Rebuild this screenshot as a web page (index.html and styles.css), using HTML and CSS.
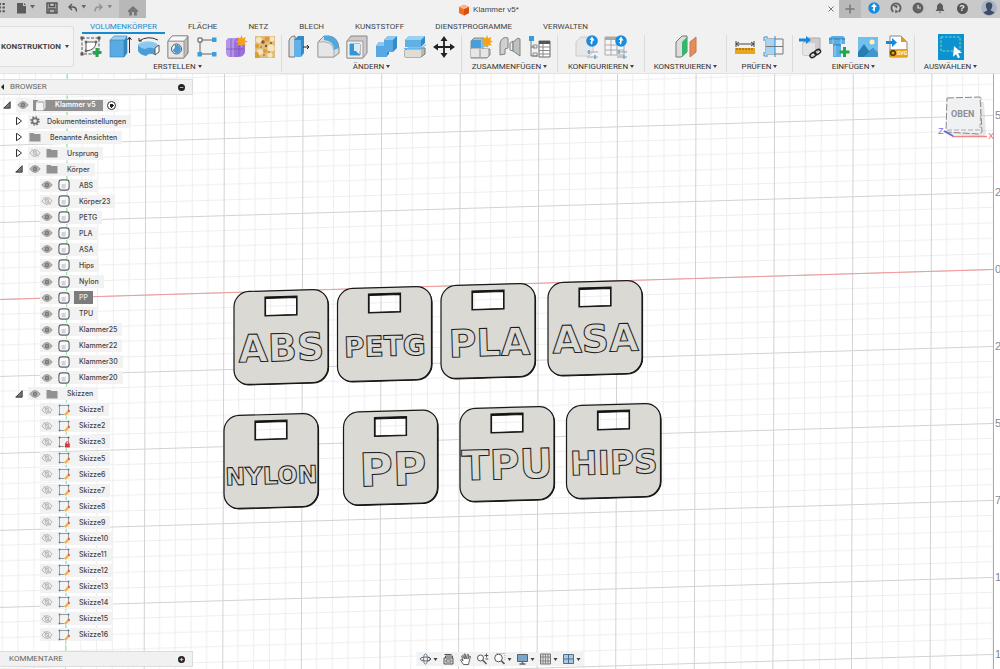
FILE: index.html
```html
<!DOCTYPE html>
<html lang="de">
<head>
<meta charset="utf-8">
<title>Klammer v5*</title>
<link rel="stylesheet" href="styles.css">
</head>
<body>
<svg class="defs" aria-hidden="true">
  <symbol id="eye" viewBox="0 0 12 10"><path d="M.8 5Q6-1.8 11.2 5 6 11.8.8 5Z" fill="#b4b4b4" stroke="#999"/><circle cx="6" cy="5" r="2.2" fill="#777"/><circle cx="6" cy="5" r=".8" fill="#bbb"/></symbol>
  <symbol id="eye-off" viewBox="0 0 12 10"><path d="M.8 5Q6-1.8 11.2 5 6 11.8.8 5ZM2.5 1.5l7.500 7" fill="none" stroke="#aaa" stroke-width=".9"/><circle cx="6" cy="5" r="1.900" fill="none" stroke="#aaa" stroke-width=".9"/></symbol>
  <symbol id="body" viewBox="0 0 12 12"><rect x=".9" y=".9" width="10.200" height="10.200" rx="2.800" fill="#fafafa" stroke="#59636b" stroke-width="1.100"/><path d="M3.500 5h4v4.500h-4z" fill="#d0d4d6"/><path d="M7.500 4v5.500" stroke="#e2e4e5"/></symbol>
  <symbol id="sketch" viewBox="0 0 12 12"><path d="M1.500 1.500h9v5M1.500 1.500v9h5" fill="none" stroke="#888" stroke-width=".8"/><path d="M.7.700h1.600v1.600H.7zM9.700.700h1.600v1.600H9.700zM.7 9.700h1.600v1.600H.7z" fill="#3279b8"/><path d="m7 11 3.800-4" stroke="#f2aa38" stroke-width="2"/><path d="m10.300 7.500 1.200-1.200" stroke="#e65338" stroke-width="2"/></symbol>
  <symbol id="sketch-lock" viewBox="0 0 12 12"><path d="M1.500 1.500h9v5M1.500 1.500v9h5" fill="none" stroke="#888" stroke-width=".8"/><path d="M.7.700h1.600v1.600H.7zM9.700.700h1.600v1.600H9.700zM.7 9.700h1.600v1.600H.7z" fill="#555"/><path d="M7 7.500h4.800v4H7z" fill="#d93440"/><path d="M8 8V6.500q1.400-1.600 2.800 0V8" fill="none" stroke="#d93440"/></symbol>
  <symbol id="folder" viewBox="0 0 12 10"><path d="M.5 1h4l1 1h6v7.500H.5z" fill="#929292"/></symbol>
  <symbol id="open" viewBox="0 0 8 8"><path d="M7.200.700v6.500H.7z" fill="#777" stroke="#222" stroke-width=".8"/></symbol>
  <symbol id="closed" viewBox="0 0 8 8"><path d="M1.500.2 6.500 4l-5 3.800z" fill="#fff" stroke="#333"/></symbol>
  <symbol id="gear" viewBox="0 0 12 12"><circle cx="6" cy="6" r="2.700" fill="none" stroke="#747474" stroke-width="1.800"/><circle cx="6" cy="6" r="4" fill="none" stroke="#747474" stroke-width="1.600" stroke-dasharray="1.570"/></symbol>
  <pattern id="grid" width="78.600" height="77" patternUnits="userSpaceOnUse" patternTransform="matrix(1 -.0302 -.003 1 145 217.600)">
    <path d="M15.700 0v77M31.400 0v77M47.200 0v77M62.900 0v77M0 15.400h78.600M0 30.800h78.600M0 46.200h78.600M0 61.600h78.600" stroke="#eee"/>
    <path d="M.5 0v77M0 .5h78.600" stroke="#d2d2d2"/>
  </pattern>
  <symbol id="plate" viewBox="-50 -50 100 100" overflow="visible">
    <g id="plate-shape" fill-rule="evenodd">
      <path transform="translate(.6 1)" fill="#111" stroke="#111" d="M-32-46h64a15 15 0 0 1 15 15v62a15 15 0 0 1-15 15h-64a15 15 0 0 1-15-15v-62a15 15 0 0 1 15-15zM-16-40v17h31v-17z"/>
      <path fill="#dad9d4" stroke="#181818" stroke-width="1.200" d="M-32-46.500h64a15 15 0 0 1 15 15v63a15 15 0 0 1-15 15h-64a15 15 0 0 1-15-15v-63a15 15 0 0 1 15-15zM-16-40.500v19h32v-19z"/>
    </g>
  </symbol>
</svg>

<header class="app-header">
  <div class="titlebar">
    <div class="quick">
      <button class="q-grid" aria-label="Daten"><svg viewBox="0 0 6 12"><path d="M0 1h1v2H0zM2.500 1h2.300v2H2.500zM0 4.600h1v2H0zM2.500 4.600h2.300v2H2.500zM0 8.200h1v2H0zM2.500 8.200h2.300v2H2.500z" fill="#555"/></svg></button>
      <button class="q-wide" aria-label="Datei"><svg viewBox="0 0 20 12"><path d="M1 1h6v3h3v7.500H1zM8 1l2 2H8z" fill="#5b5b5b"/><path d="M14 3h5l-2.500 3.500z" fill="#666"/></svg></button>
      <button class="q-save" aria-label="Speichern"><svg viewBox="0 0 12 12"><path d="M1 1h10v10H1zM3.500 1v3.500h5V1M3 11V7h6v4" fill="#aaa" stroke="#555" stroke-width="1.400"/></svg></button>
      <button class="q-wide" aria-label="Rückgängig"><svg viewBox="0 0 20 12"><path d="M2 5h4.500q3 .5 3 4.500M5 2 2 5l3 3" fill="none" stroke="#555" stroke-width="1.400"/><path d="M14.500 3h4.600l-2.300 3.500z" fill="#666"/></svg></button>
      <button class="q-wide" aria-label="Wiederholen"><svg viewBox="0 0 20 12"><path d="M9 5H5q-3 .5-3 4.500M6 2l3 3-3 3" fill="none" stroke="#929292" stroke-width="1.400"/><path d="M14.500 3h4.600l-2.300 3.500z" fill="#888"/></svg></button>
      <button class="q-home" aria-label="Startseite"><svg viewBox="0 0 12 12"><path d="M1 6.500 6 2l5 4.500V8H9.800v3.500H7V8H5v3.500H2.200V8H1z" fill="#777"/></svg></button>
    </div>
    <div class="doc-tab">
      <span class="doc-name"><svg viewBox="0 0 12 12"><path d="m6 .8 5 2.200v6L6 11.500 1 9V3z" fill="#f36b21"/><path d="m1 3 5-2.200L11 3 6 5.200z" fill="#ffb382"/><path d="m6 5.200 5-2.200v6l-5 2.500z" fill="#dd4d12"/></svg>Klammer v5*</span>
      <button class="close" aria-label="Schließen"><svg viewBox="0 0 8 8"><path d="m1.500 1.500 5 5m0-5-5 5" stroke="#777"/></svg></button>
    </div>
    <div class="account">
      <button class="new-tab" aria-label="Neu"><svg viewBox="0 0 12 12"><path d="M6 1.500v9M1.500 6h9" stroke="#777" stroke-width="1.500"/></svg></button>
      <button aria-label="Erweiterungen"><svg viewBox="0 0 12 12"><circle cx="6" cy="6" r="5.700" fill="#168be0"/><path d="M6 1.500 9 5H7.200L6.500 10 4 7h1.200V5H3z" fill="#fff"/></svg></button>
      <button aria-label="Aktualisieren"><svg viewBox="0 0 12 12"><path d="M3.300 9.700A4.600 4.600 0 1 1 8.700 9.700" fill="none" stroke="#5c5c5c" stroke-width="1.800"/><path d="M2 2.500 7.500 3.500 7 6.500M5.500 7.500l3 2.500-3.500 1z" fill="#5c5c5c"/></svg></button>
      <button aria-label="Auftragsstatus"><svg viewBox="0 0 12 12"><circle cx="6" cy="6" r="4.700" fill="#666" stroke="#5c5c5c" stroke-width="1.500"/><path d="M6 3v3h3" fill="none" stroke="#ddd" stroke-width="1.200"/></svg></button>
      <button aria-label="Benachrichtigungen"><svg viewBox="0 0 12 12"><path d="M1.500 9 3 7V4q.3-2 2.300-2.600Q6-.3 6.700 1.400 8.700 2 9 4v3l1.500 2zM4.800 9.800h2.400L6 11.300z" fill="#5c5c5c"/></svg></button>
      <button class="help" aria-label="Hilfe"><span>?</span></button>
      <button class="profile" aria-label="Profil"><svg class="avatar" viewBox="0 0 16 16"><circle cx="8" cy="8" r="7.800" fill="#a9b5c7"/><path d="M4.800 5a3.300 3.300 0 0 1 6.500 0c.2 2-.8 4-1.500 4.500v1l4 2Q8 17.800 2.200 12.500l4-2v-1Q4.700 8 4.800 5z" fill="#404b66"/></svg></button>
    </div>
  </div>

  <div class="ribbon">
    <button class="workspace">KONSTRUKTION<i class="caret"></i></button>
    <div class="ribbon-main">
      <nav class="tabs">
        <a href="#" class="active">VOLUMENKÖRPER</a><a href="#">FLÄCHE</a><a href="#">NETZ</a><a href="#">BLECH</a><a href="#">KUNSTSTOFF</a><a href="#">DIENSTPROGRAMME</a><a href="#">VERWALTEN</a>
      </nav>
      <div class="groups">
        <section class="group">
          <div class="tools">
            <button aria-label="Skizze"><svg viewBox="0 0 24 24"><path d="M3 3h17v16H3z" fill="none" stroke="#555" stroke-dasharray="3 1.500"/><path d="M1.500 1.500h3v3h-3zM18.500 1.500h3v3h-3zM1.500 17.500h3v3h-3z" fill="#555"/><path d="M7 7h10q0 8-10 9z" fill="#fff" stroke="#555"/><path d="M5.800 5.800h2.400v2.400H5.800zM15.800 5.800h2.400v2.400h-2.400zM5.800 14.800h2.400v2.400H5.800z" fill="#666"/><path d="M18 13v9M13.500 17.500h9" stroke="#24a548" stroke-width="3"/></svg></button>
            <button aria-label="Extrusion"><svg viewBox="0 0 24 24"><path d="M2 5h14v17H2z" fill="#5aaae3"/><path d="m2 5 4-4h13l-3 4z" fill="#9bd0f2"/><path d="m16 5 3-4v17l-3 4z" fill="#3489c4"/><path d="M2 5h14v17H2zm0 0 4-4h13v17l-3 4" fill="none" stroke="#357fae" stroke-width=".6"/><path d="M21.500 18V3M19.500 5l2-3 2 3" fill="none" stroke="#333"/></svg></button>
            <button aria-label="Drehen"><svg viewBox="0 0 24 24"><path d="M1 9q9-5 18-1l3 3-4 3v6q-5-3-9 0l-7-4z" fill="#8cc8ef"/><path d="M1 10q2 3 7 4 5-3 10 0v6q-5-3-9 1-6-1-8-5z" fill="#4a9dd8"/><path d="m18 13 4-3v7l-4 3z" fill="#fff" stroke="#555"/><path d="M2 6q9-6 19-1M2 3v3h3" fill="none" stroke="#333"/></svg></button>
            <button aria-label="Bohrung"><svg viewBox="0 0 24 24"><path d="m2 6 4-5h16v17l-4 5H2z" fill="#bbb" stroke="#777"/><path d="M2 6h16v17H2z" fill="#e8e8e8" stroke="#999"/><path d="m2 6 4-5h16l-4 5z" fill="#f8f8f8" stroke="#777" stroke-width=".6"/><circle cx="10.500" cy="14" r="5" fill="#fff" stroke="#555"/><path d="M8.500 10q5-1 6.500 4-1 4-4.500 4.500-3-1-4-3.500 3-1 2-5z" fill="#4a9bd5"/></svg></button>
            <button aria-label="Muster"><svg viewBox="0 0 24 24"><path d="M7 5h10M5 7v10M7 19h10" fill="none" stroke="#666"/><path d="M3 3h4v4H3z" fill="#fff" stroke="#555"/><path d="M17 2.500h4.500V7H17zM2.500 17H7v4.500H2.500zM17 17h4.500v4.500H17z" fill="#3e9ddc"/></svg></button>
            <button aria-label="Form"><svg viewBox="0 0 24 24"><path d="M2 8q0-5 5-5h8q6 1 6 7v7q-1 5-7 5H7q-5 0-5-6z" fill="#9a71da"/><path d="M2 8q0-5 5-5h8q-5 0-5 5v14H7q-5 0-5-6z" fill="#b493e9"/><path d="M2 14h18M7 4v18M15 5v16" stroke="#7550b8" fill="none" stroke-width=".7"/><path d="m17.500 0 1.200 3.300 3.200-1.200-1.300 3.200L24 6.500l-3.400 1.200 1.300 3.200-3.200-1.300-1.200 3.400-1.200-3.400-3.200 1.300 1.300-3.200L11 6.500l3.400-1.200-1.300-3.200 3.200 1.200z" fill="#f5a21b"/></svg></button>
            <button aria-label="Textur"><svg viewBox="0 0 24 24"><path d="M2 1h20v22H2z" fill="#e0bd7c"/><g fill="#f2e5bf"><circle cx="6" cy="5" r="3"/><circle cx="18" cy="13" r="3.500"/><circle cx="7" cy="17" r="3"/><circle cx="17" cy="20" r="2.500"/><circle cx="19" cy="4" r="2.500"/></g><g fill="#dd9c2f"><circle cx="14" cy="4" r="2.500"/><circle cx="4" cy="11" r="2"/><circle cx="12" cy="16" r="2"/><path d="M2 17h3l2 6H2z"/></g><g fill="#85552a"><circle cx="10" cy="7" r="1.800"/><circle cx="18" cy="8" r="1"/><circle cx="13" cy="11" r="1.200"/><circle cx="8" cy="12" r=".8"/><circle cx="16" cy="17" r=".8"/><circle cx="11" cy="20" r=".8"/></g></svg></button>
          </div>
          <button class="menu">ERSTELLEN<i class="caret"></i></button>
        </section>
        <section class="group">
          <div class="tools">
            <button aria-label="Drücken/Ziehen"><svg viewBox="0 0 24 24"><path d="M2 6q1-5 6-5v21H2z" fill="#ddd" stroke="#777"/><path d="m7 5 4-4h6v17l-3 4H7z" fill="#348bca"/><path d="M7 5h7v17H7z" fill="#62b1e7"/><path d="M16 12h6m-2-2 2 2-2 2" fill="none" stroke="#222"/></svg></button>
            <button aria-label="Abrunden"><svg viewBox="0 0 24 24"><path d="M2 7 8 1h5q9 1 10 12v5l-5 4H2z" fill="#ddd" stroke="#888"/><path d="M8 1h5q9 1 10 12l-5 2q0-9-10-10z" fill="#50a8df"/><path d="M2 7q15-2 16 9v6H2z" fill="#e6e6e6" stroke="#aaa"/></svg></button>
            <button aria-label="Schale"><svg viewBox="0 0 24 24"><path d="m2 6 4-5h16v17l-4 5H2z" fill="#ccc" stroke="#888"/><path d="M2 6h16v17H2z" fill="#eee" stroke="#999"/><path d="M5 9h10v11H5z" fill="#f8f8f8" stroke="#888"/><path d="M5 9v11h10l-4-4H9V9z" fill="#3795d3"/><path d="M9 9h6v7H9z" fill="#d8ebf7"/></svg></button>
            <button aria-label="Kombinieren"><svg viewBox="0 0 24 24"><path d="m2 11 3-4h5V5l4-4h9v12l-4 4h-4v2l-3 3H2z" fill="#328bc9"/><path d="M2 11h8V5h9v12h-6v5H2z" fill="#58a9e1"/><path d="m10 5 4-4h9l-4 4zM2 11l3-4h5v4z" fill="#8ccaf1"/></svg></button>
            <button aria-label="Teilen"><svg viewBox="0 0 24 24"><path d="m2 5 4-4h16v7l-4 4H2z" fill="#318ac9"/><path d="M2 5h16v7H2z" fill="#60afe5"/><path d="m2 5 4-4h16l-4 4z" fill="#9bd1f2"/><path d="m2 15 3-2h17v6l-4 3H2z" fill="#b8bbb5" stroke="#777"/><path d="M2 15h16v7H2z" fill="#ddddd5"/><path d="M1 13.500h17l5-4" fill="none" stroke="#65b4ed"/></svg></button>
            <button aria-label="Verschieben"><svg viewBox="0 0 24 24"><path d="M12 3v18M3 12h18" stroke="#222" stroke-width="1.800"/><path d="m12 1 3.500 5h-7zM12 23l3.500-5h-7zM1 12l5-3.500v7zM23 12l-5-3.500v7z" fill="#222"/></svg></button>
          </div>
          <button class="menu">ÄNDERN<i class="caret"></i></button>
        </section>
        <section class="group">
          <div class="tools">
            <button aria-label="Komponente"><svg viewBox="0 0 24 24"><path d="m2 6 3-3h9v11h7v6l-3 3H2z" fill="#bbb" stroke="#888"/><path d="M2 5h10v8H2z" fill="#459fdd"/><path d="M2 14h8v8H2zM12 14h7v8h-7z" fill="#e6e6e6"/><path d="m12 10 3-2h6l-2 4h-7z" fill="#80c4ed"/><path d="m18 0 1.200 3.200L22.500 2l-1.200 3.200L24 6.500l-2.700 1.200 1.200 3.200-3.300-1.200L18 13l-1.200-3.300-3.200 1.200 1.200-3.200L12 6.500l2.800-1.300L13.600 2l3.200 1.200z" fill="#f5a21b"/></svg></button>
            <button aria-label="Verbindung"><svg viewBox="0 0 24 24"><path d="M2 20V8q2-7 8-5v10l-3 1v5z" fill="#cfd1d1" stroke="#7e8282"/><path d="M12 8v7l3 1V6z" fill="#eee" stroke="#7e8282"/><path d="m15 7 5-4 2 1v17l-7-5z" fill="#bfc1c1" stroke="#7e8282"/></svg></button>
            <button aria-label="Stückliste"><svg viewBox="0 0 24 24"><path d="M2 1h5v5H2z" fill="#389bdd"/><path d="M4 6v15h7M4 12h4" fill="none" stroke="#777"/><path d="M12 6h11v16H12z" fill="#fff" stroke="#666"/><path d="M12 6h11v3H12z" fill="#555"/><path d="M12 12h11M12 15.500h11M12 19h11M16 9v13M6 10h4v3H6zM6 18h4v3H6z" fill="none" stroke="#888"/></svg></button>
          </div>
          <button class="menu">ZUSAMMENFÜGEN<i class="caret"></i></button>
        </section>
        <section class="group">
          <div class="tools">
            <button aria-label="Modell konfigurieren"><svg viewBox="0 0 24 24"><path d="m1 7 5-5h12v15l-4 4H1z" fill="#e7e7e7" stroke="#ccc"/><path d="M12 17h11M12 22h11" stroke="#aaa"/><path d="M14 15v4M20 20v4" stroke="#4da9df" stroke-width="1.500"/><circle cx="17" cy="6" r="5.800" fill="#178ce1"/><path d="m17 1.500 2.500 4h-1.700L17 10l-2-3h1V5h-1.500z" fill="#fff"/></svg></button>
            <button aria-label="Konfigurationstabelle"><svg viewBox="0 0 24 24"><path d="M1 2h19v18H1z" fill="#f6f6f6" stroke="#aaa"/><path d="M1 2h19v3H1z" fill="#aaa"/><path d="M1 10h19M1 15h19M7 5v15M13 5v15" stroke="#aaa"/><path d="M13 17h10M13 22h10" stroke="#999"/><path d="M15 15v4M20 20v4" stroke="#65add6" stroke-width="1.500"/><circle cx="17" cy="6" r="5.800" fill="#178ce1"/><path d="m17 1.500 2.500 4h-1.700L17 10l-2-3h1V5h-1.500z" fill="#fff"/></svg></button>
          </div>
          <button class="menu">KONFIGURIEREN<i class="caret"></i></button>
        </section>
        <section class="group">
          <div class="tools">
            <button aria-label="Versatzebene"><svg viewBox="0 0 24 24"><path d="m2 7 6-6h5v16l-6 5H2z" fill="#ddd" stroke="#777"/><path d="m8 7 5-5v15l-5 5z" fill="#36b56c"/><path d="m16 7 6-5v15l-6 5z" fill="#e88d57" stroke="#c57951"/></svg></button>
          </div>
          <button class="menu">KONSTRUIEREN<i class="caret"></i></button>
        </section>
        <section class="group">
          <div class="tools">
            <button aria-label="Messen"><svg viewBox="0 0 24 24"><path d="M3 6v6M21 6v6M3 9h18M6 7 3 9l3 2M18 7l3 2-3 2" fill="none" stroke="#444"/><path d="M2 13h20v6H2z" fill="#eaa51e"/><path d="M4 13v2m3-2v2m3-2v2m3-2v2m3-2v2m3-2v2" stroke="#805b0d"/></svg></button>
            <button aria-label="Schnitt"><svg viewBox="0 0 24 24"><path d="M4 4h17v15H4z" fill="#f4f4f4" stroke="#777"/><path d="M4 4h9v15H4z" fill="#a7d4f2"/><path d="M4 11.500h17" stroke="#777"/><path d="M13 1v21M2 6V2h4M2 17v4h4" fill="none" stroke="#288fda"/></svg></button>
          </div>
          <button class="menu">PRÜFEN<i class="caret"></i></button>
        </section>
        <section class="group">
          <div class="tools">
            <button aria-label="Ableiten"><svg viewBox="0 0 24 24"><path d="m5 8 5-5h12v11l-5 6H5z" fill="#ccc" stroke="#aaa"/><path d="M5 8h12v12H5z" fill="#e5e5e5"/><path d="M1 3.500h7V1l5 4-5 4V6.500H1z" fill="#1688de"/><g fill="none" stroke="#222" stroke-width="1.500"><ellipse cx="15" cy="20" rx="3.200" ry="2.200" transform="rotate(-30 15 20)"/><ellipse cx="19.500" cy="17" rx="3.200" ry="2.200" transform="rotate(-30 19.500 17)"/></g></svg></button>
            <button aria-label="Verbindungselement"><svg viewBox="0 0 24 24"><path d="M2 3 5 1h11l2 2v6H2zM6 9h8v13H6z" fill="#5daee2"/><path d="M2 4h16M6 10h8" stroke="#277dad"/><path d="M8 10v11M6 4v5M14 4v5" stroke="#9bd1f1"/><path d="M17.500 12v10M12.500 17h10" stroke="#24a548" stroke-width="3"/></svg></button>
            <button aria-label="Bild"><svg viewBox="0 0 24 24"><path d="M2 2h20v20H2z" fill="#72bfed"/><circle cx="16" cy="7" r="2.500" fill="#fff4b5"/><path d="M2 17 8 9l5 7 4-3 5 5v4H2z" fill="#287eb4"/><path d="m11 19 6-6 5 5v4H8z" fill="#4298cb"/></svg></button>
            <button aria-label="SVG einfügen"><svg viewBox="0 0 24 24"><path d="M5 1h11l6 6v15H5z" fill="#fff" stroke="#888"/><path d="M16 1v6h6z" fill="#e89b14"/><path d="M4 14h19v8H4z" fill="#eba31b"/><path d="M1 6h6V3l5 4.500L7 12V9H1z" fill="#1688de"/><circle cx="8" cy="18" r="2.300" fill="none" stroke="#40300c" stroke-width="1.500"/><text x="12" y="20" class="svg-word">SVG</text></svg></button>
          </div>
          <button class="menu">EINFÜGEN<i class="caret"></i></button>
        </section>
        <section class="group">
          <div class="tools">
            <button class="selected" aria-label="Auswählen"><svg viewBox="0 0 26 26"><path d="M3 3h19v14H3z" fill="none" stroke="#7cdbb5" stroke-dasharray="2.500 1.500"/><path d="m16 12 8 7-4 .3 2 4-2 1-2-4-3 2.500z" fill="#fff"/></svg></button>
          </div>
          <button class="menu">AUSWÄHLEN<i class="caret"></i></button>
        </section>
      </div>
    </div>
  </div>
</header>

<main class="viewport">
  <svg class="scene">
    <g transform="translate(0 -74)">
      <rect width="100%" height="120%" fill="url(#grid)"/>
      <path d="M0 299.500 993 269.500" stroke="#f29a9a"/>
      <path d="M67 74 66 653" stroke="#9de6a6" stroke-dasharray="8 3"/>
      <g class="tag-art">
        <g transform="translate(281 337)"><use href="#plate" transform="skewY(-1.700)" x="-50" y="-50" width="100" height="100"/><text transform="rotate(-1.700)" y="24" font-size="38">ABS</text></g>
        <g transform="translate(384.500 334)"><use href="#plate" transform="skewY(-1.700)" x="-50" y="-50" width="100" height="100"/><text transform="rotate(-1.700)" y="22" font-size="28">PETG</text></g>
        <g transform="translate(488 331)"><use href="#plate" transform="skewY(-1.700)" x="-50" y="-50" width="100" height="100"/><text transform="rotate(-1.700)" x="1" y="25" font-size="38">PLA</text></g>
        <g transform="translate(595 328)"><use href="#plate" transform="skewY(-1.700)" x="-50" y="-50" width="100" height="100"/><text transform="rotate(-1.700)" y="24" font-size="38">ASA</text></g>
        <g transform="translate(271 461)"><use href="#plate" transform="skewY(-1.700)" x="-50" y="-50" width="100" height="100"/><text transform="rotate(-1.700)" y="23" font-size="24">NYLON</text></g>
        <g transform="translate(390.500 457.500)"><use href="#plate" transform="skewY(-1.700)" x="-50" y="-50" width="100" height="100"/><text transform="rotate(-1.700)" x="2" y="28" font-size="46">PP</text></g>
        <g transform="translate(507 454)"><use href="#plate" transform="skewY(-1.700)" x="-50" y="-50" width="100" height="100"/><text transform="rotate(-1.700)" y="25" font-size="41">TPU</text></g>
        <g transform="translate(613.500 451)"><use href="#plate" transform="skewY(-1.700)" x="-50" y="-50" width="100" height="100"/><text transform="rotate(-1.700)" y="23" font-size="33">HIPS</text></g>
      </g>
    </g>
  </svg>

  <aside class="sidebar">
    <div class="panel-bar"><i class="collapse"></i><span>BROWSER</span><button class="dot" aria-label="Minimieren">−</button></div>
    <ul class="tree">
      <li class="l0"><svg class="tw"><use href="#open"/></svg><span class="row root"><svg class="eye"><use href="#eye"/></svg><span class="root-name"><svg class="ic" viewBox="0 0 12 12"><path d="m2.500 4 2-2.500H11v7l-2 2.500H2.500z" fill="#c4c4c4" stroke="#fff" stroke-width=".8"/><path d="M2.500 4H9v7H2.500z" fill="#f5f5f5"/></svg><b>Klammer v5</b></span><input type="radio" checked aria-label="Klammer v5 aktivieren"></span></li>
      <li class="l1"><svg class="tw"><use href="#closed"/></svg><span class="row"><svg class="ic"><use href="#gear"/></svg><span class="name">Dokumenteinstellungen</span></span></li>
      <li class="l1"><svg class="tw"><use href="#closed"/></svg><span class="row"><svg class="ic"><use href="#folder"/></svg><span class="name far">Benannte Ansichten</span></span></li>
      <li class="l1"><svg class="tw"><use href="#closed"/></svg><span class="row"><svg class="eye"><use href="#eye-off"/></svg><svg class="ic"><use href="#folder"/></svg><span class="name far">Ursprung</span></span></li>
      <li class="l1"><svg class="tw"><use href="#open"/></svg><span class="row"><svg class="eye"><use href="#eye"/></svg><svg class="ic"><use href="#folder"/></svg><span class="name far">Körper</span></span></li>
      <li class="l2"><span class="row"><svg class="eye"><use href="#eye"/></svg><svg class="ic"><use href="#body"/></svg><span class="name far">ABS</span></span></li>
      <li class="l2"><span class="row"><svg class="eye"><use href="#eye-off"/></svg><svg class="ic"><use href="#body"/></svg><span class="name far">Körper23</span></span></li>
      <li class="l2"><span class="row"><svg class="eye"><use href="#eye"/></svg><svg class="ic"><use href="#body"/></svg><span class="name far">PETG</span></span></li>
      <li class="l2"><span class="row"><svg class="eye"><use href="#eye"/></svg><svg class="ic"><use href="#body"/></svg><span class="name far">PLA</span></span></li>
      <li class="l2"><span class="row"><svg class="eye"><use href="#eye"/></svg><svg class="ic"><use href="#body"/></svg><span class="name far">ASA</span></span></li>
      <li class="l2"><span class="row"><svg class="eye"><use href="#eye"/></svg><svg class="ic"><use href="#body"/></svg><span class="name far">Hips</span></span></li>
      <li class="l2"><span class="row"><svg class="eye"><use href="#eye"/></svg><svg class="ic"><use href="#body"/></svg><span class="name far">Nylon</span></span></li>
      <li class="l2"><span class="row"><svg class="eye"><use href="#eye"/></svg><svg class="ic"><use href="#body"/></svg><span class="name far picked">PP</span></span></li>
      <li class="l2"><span class="row"><svg class="eye"><use href="#eye"/></svg><svg class="ic"><use href="#body"/></svg><span class="name far">TPU</span></span></li>
      <li class="l2"><span class="row"><svg class="eye"><use href="#eye"/></svg><svg class="ic"><use href="#body"/></svg><span class="name far">Klammer25</span></span></li>
      <li class="l2"><span class="row"><svg class="eye"><use href="#eye"/></svg><svg class="ic"><use href="#body"/></svg><span class="name far">Klammer22</span></span></li>
      <li class="l2"><span class="row"><svg class="eye"><use href="#eye"/></svg><svg class="ic"><use href="#body"/></svg><span class="name far">Klammer30</span></span></li>
      <li class="l2"><span class="row"><svg class="eye"><use href="#eye"/></svg><svg class="ic"><use href="#body"/></svg><span class="name far">Klammer20</span></span></li>
      <li class="l1"><svg class="tw"><use href="#open"/></svg><span class="row"><svg class="eye"><use href="#eye"/></svg><svg class="ic"><use href="#folder"/></svg><span class="name far">Skizzen</span></span></li>
      <li class="l2"><span class="row"><svg class="eye"><use href="#eye-off"/></svg><svg class="ic"><use href="#sketch"/></svg><span class="name far">Skizze1</span></span></li>
      <li class="l2"><span class="row"><svg class="eye"><use href="#eye-off"/></svg><svg class="ic"><use href="#sketch"/></svg><span class="name far">Skizze2</span></span></li>
      <li class="l2"><span class="row"><svg class="eye"><use href="#eye-off"/></svg><svg class="ic"><use href="#sketch-lock"/></svg><span class="name far">Skizze3</span></span></li>
      <li class="l2"><span class="row"><svg class="eye"><use href="#eye-off"/></svg><svg class="ic"><use href="#sketch"/></svg><span class="name far">Skizze5</span></span></li>
      <li class="l2"><span class="row"><svg class="eye"><use href="#eye-off"/></svg><svg class="ic"><use href="#sketch"/></svg><span class="name far">Skizze6</span></span></li>
      <li class="l2"><span class="row"><svg class="eye"><use href="#eye-off"/></svg><svg class="ic"><use href="#sketch"/></svg><span class="name far">Skizze7</span></span></li>
      <li class="l2"><span class="row"><svg class="eye"><use href="#eye-off"/></svg><svg class="ic"><use href="#sketch"/></svg><span class="name far">Skizze8</span></span></li>
      <li class="l2"><span class="row"><svg class="eye"><use href="#eye-off"/></svg><svg class="ic"><use href="#sketch"/></svg><span class="name far">Skizze9</span></span></li>
      <li class="l2"><span class="row"><svg class="eye"><use href="#eye-off"/></svg><svg class="ic"><use href="#sketch"/></svg><span class="name far">Skizze10</span></span></li>
      <li class="l2"><span class="row"><svg class="eye"><use href="#eye-off"/></svg><svg class="ic"><use href="#sketch"/></svg><span class="name far">Skizze11</span></span></li>
      <li class="l2"><span class="row"><svg class="eye"><use href="#eye-off"/></svg><svg class="ic"><use href="#sketch"/></svg><span class="name far">Skizze12</span></span></li>
      <li class="l2"><span class="row"><svg class="eye"><use href="#eye-off"/></svg><svg class="ic"><use href="#sketch"/></svg><span class="name far">Skizze13</span></span></li>
      <li class="l2"><span class="row"><svg class="eye"><use href="#eye-off"/></svg><svg class="ic"><use href="#sketch"/></svg><span class="name far">Skizze14</span></span></li>
      <li class="l2"><span class="row"><svg class="eye"><use href="#eye-off"/></svg><svg class="ic"><use href="#sketch"/></svg><span class="name far">Skizze15</span></span></li>
      <li class="l2"><span class="row"><svg class="eye"><use href="#eye-off"/></svg><svg class="ic"><use href="#sketch"/></svg><span class="name far">Skizze16</span></span></li>
    </ul>
    <div class="panel-bar"><span>KOMMENTARE</span><button class="dot" aria-label="Kommentar hinzufügen">+</button></div>
  </aside>

  <div class="ruler"><span>5</span><span>2</span><span>0</span><span>2</span><span>5</span><span>7</span><span>1</span><span>1</span></div>

  <svg class="cube" viewBox="0 0 58 50">
    <path d="m10 10 34-2 2 32-4 3-33-3z" fill="#bbb" opacity=".35" transform="translate(2 2)"/>
    <path d="m9 6 33-1 2 35-3 2-33-2z" fill="#f0f1f2" stroke="#888" stroke-dasharray="7 2"/>
    <path d="M9 38h33l1-33" fill="none" stroke="#999" stroke-width=".8" stroke-dasharray="5 2"/>
    <path d="M14 44.500h35" stroke="#f08585" stroke-width="1.500"/><path d="m6 39 9 5" stroke="#6968d8" stroke-width="2"/>
    <text x="13" y="25" class="cube-face">OBEN</text><text x="0" y="42" class="axis-z">Z</text><text x="50" y="47" class="axis-x">X</text>
  </svg>

  <div class="navbar">
    <button aria-label="Orbit"><svg viewBox="0 0 12 12"><ellipse cx="6" cy="6" rx="5.200" ry="2" fill="none" stroke="#555"/><ellipse cx="6" cy="6" rx="2" ry="5.200" fill="none" stroke="#6887a6"/><path d="m9 4 2.500 2L9 8" fill="none" stroke="#555"/></svg><i class="caret"></i></button>
    <button aria-label="Ansehen"><svg viewBox="0 0 12 12"><path d="M1.500 5h9v6h-9zM3 5V3h7v2M2 1.500h7" fill="#ddd" stroke="#555"/><path d="M3.500 7h5v2h-5z" fill="#fff" stroke="#666"/></svg></button>
    <button aria-label="Pan"><svg viewBox="0 0 12 12"><path d="M4 11.500 1 7l1-.7L3.500 8 2.300 3l1-.5L5 6 4.500 1h1.200l.8 5L8 1.300l1 .3L8.300 6l1.800-3 .9.500L9.500 9 9 11.500z" fill="#fff" stroke="#555" stroke-width=".9"/></svg></button>
    <button aria-label="Zoom"><svg viewBox="0 0 12 12"><circle cx="4" cy="5" r="3" fill="#fff" stroke="#555"/><path d="m6 7 4 4" stroke="#555" stroke-width="1.500"/><path d="M8 2.500h4M10 .5v4M9 6h3" stroke="#555"/></svg></button>
    <button aria-label="Zoomfenster"><svg viewBox="0 0 12 12"><circle cx="5" cy="5" r="3.800" fill="#fff" stroke="#555"/><path d="m8 8 3 3" stroke="#555" stroke-width="1.700"/><path d="M3 .5h8.500V7" fill="none" stroke="#999" stroke-dasharray="1 1"/></svg><i class="caret"></i></button>
    <button aria-label="Anzeigeeinstellungen"><svg viewBox="0 0 12 12"><path d="M1 1.500h10v7H1z" fill="#79a6ca" stroke="#58626b"/><path d="M6 8.500v2M3 11h6" stroke="#666" stroke-width="1.500"/></svg><i class="caret"></i></button>
    <button aria-label="Raster"><svg viewBox="0 0 12 12"><path d="M1 1h10v10H1z" fill="#ddd" stroke="#777"/><path d="M3.500 1v10M6 1v10M8.500 1v10M1 4h10M1 8h10" stroke="#777" stroke-width=".8"/></svg><i class="caret"></i></button>
    <button aria-label="Ansichtsfenster"><svg viewBox="0 0 12 12"><path d="M1 1.500h10v9H1zM6 1.500v9M1 6h10" fill="#a8cbe5" stroke="#506f8b"/></svg><i class="caret"></i></button>
  </div>
</main>
</body>
</html>
```
FILE: styles.css
```css
* { box-sizing: border-box; }
html, body { height: 100%; }
body {
  margin: 0;
  display: flex;
  flex-direction: column;
  overflow: hidden;
  background: #fff;
  color: #444;
  font: 500 7px/10px Inter, "Liberation Sans", sans-serif;
}
button {
  display: flex;
  align-items: center;
  justify-content: center;
  margin: 0;
  padding: 0;
  border: 0;
  background: none;
  color: inherit;
  font: inherit;
}
svg { display: block; flex: none; }
.defs { position: absolute; width: 0; height: 0; }
.caret {
  flex: none;
  width: 0;
  margin-left: 2px;
  border: 2px solid transparent;
  border-top: 3px solid #444;
  border-bottom: 0;
}

.app-header { flex: none; background: #f1f1f1; border-bottom: 1px solid #e2e2e2; }
.titlebar { display: flex; height: 18px; background: #c9c9c9; }
.quick { display: flex; align-items: stretch; }
.quick svg { height: 12px; }
.quick button { padding-bottom: 2px; }
.q-grid { width: 16px; justify-content: flex-start; }
.q-grid svg { width: 6px; }
.q-wide { width: 26px; justify-content: flex-start; }
.q-wide svg { width: 20px; }
.q-save { width: 25px; justify-content: flex-start; padding-left: 4px; }
.q-save svg, .q-home svg { width: 12px; }
.q-home { width: 27px; background: #b8b8b8; }
.quick .q-home { padding: 2px 0 0; }
.doc-tab {
  flex: 1;
  display: flex;
  align-items: center;
  background: #f1f1f1;
  font: 8px/12px "Liberation Sans", Arial, sans-serif;
}
.doc-name { flex: 1; display: flex; align-items: center; justify-content: center; gap: 3px; padding: 2px 0 0 8px; }
.doc-name svg { width: 12px; height: 12px; }
.close { width: 16px; height: 18px; }
.close svg { width: 8px; height: 8px; }
.account { display: flex; }
.account button { width: 22px; padding-bottom: 2px; }
.account .new-tab { background: #b9b9b9; margin-right: 2px; padding: 0; }
.account .profile { width: 27px; padding-left: 5px; }
.account svg { width: 12px; height: 12px; }
.account .avatar { width: 16px; height: 16px; }
.help span {
  width: 11px;
  height: 11px;
  border-radius: 50%;
  background: #555;
  color: #eee;
  font: bold 9px/11px "Liberation Sans", Arial, sans-serif;
}

.ribbon { display: flex; font: 500 8px/10px Roboto, sans-serif; }
.workspace {
  width: 74px;
  height: 41px;
  margin-top: 8px;
  padding-right: 3px;
  border: 1px solid #dedede;
  border-left: 0;
  border-radius: 0 3px 3px 0;
  background: #f4f4f4;
  font-weight: 700;
}
.workspace .caret { margin-left: 4px; }
.ribbon-main { flex: 1; min-width: 0; }
.tabs { display: flex; gap: 15px; padding-left: 8px; font-weight: 400; }
.tabs a {
  padding: 4px 8px 0;
  border-bottom: 2px solid transparent;
  color: #444;
  text-decoration: none;
}
.tabs .active { color: #168bd0; border-color: #168bd0; }
.groups {
  display: grid;
  grid-template-columns: 208fr 180fr 96fr 87fr 82fr 66fr 122fr 85fr;
  padding: 1px 0;
}
.group { display: flex; flex-direction: column; align-items: center; border-right: 1px solid #dcdcdc; }
.group:last-child { border-right: 0; padding-right: 14px; }
.tools { display: flex; gap: 5px; height: 24px; align-items: center; }
.tools svg { width: 24px; height: 24px; }
.tools .selected { background: #0c91d1; }
.tools .selected svg { width: 26px; height: 26px; }
.menu { height: 11px; margin-top: 2px; white-space: nowrap; font-weight: 400; color: #333; }
.svg-word { font: bold 5px "Liberation Sans", Arial, sans-serif; fill: #fff; }

.viewport { flex: 1; position: relative; min-height: 0; overflow: hidden; }
.scene { position: absolute; inset: 0; width: 100%; height: 100%; }
.tag-art text {
  font-family: "DejaVu Sans", sans-serif;
  font-weight: 700;
  text-anchor: middle;
  fill: #dad9d4;
  stroke: #1c1c1c;
  stroke-width: 1px;
}
.sidebar {
  position: absolute;
  inset: 5px auto 2px 0;
  width: 193px;
  display: flex;
  flex-direction: column;
}
.panel-bar {
  display: flex;
  align-items: center;
  height: 16px;
  padding: 0 7px 0 9px;
  border: 1px solid #dcdcdc;
  border-left: 0;
  background: #f1f1f1;
  color: #666;
  font: 400 8px/10px Roboto, sans-serif;
}
.panel-bar span { flex: 1; }
.collapse { width: 4px; margin: 0 6px 0 -9px; border: 3px solid transparent; border-right: 3px solid #222; border-left: 0; }
.dot { width: 7px; height: 7px; border-radius: 50%; background: #222; color: #fff; line-height: 7px; }
.tree {
  flex: 1;
  display: flex;
  flex-direction: column;
  justify-content: space-between;
  margin: 0;
  padding: 3px 0 9px;
  list-style: none;
}
.tree li { display: flex; align-items: center; gap: 5px; height: 14px; }
.l0 { padding-left: 3px; }
.l1 { padding-left: 15px; }
.l2 { padding-left: 40px; }
.tw { width: 8px; height: 8px; }
.row { display: flex; align-items: center; gap: 5px; height: 13px; padding-left: 1px; background: #f2f2f2; }
.eye { width: 12px; height: 10px; }
.ic { width: 12px; height: 12px; }
.name { padding: 0 5px 0 1px; line-height: 13px; }
.name.far { padding-left: 5px; margin-left: -1px; }
.picked { background: #7c7c7c; color: #e8e8e8; }
.root-name { display: flex; align-items: center; gap: 9px; height: 11px; padding: 0 7px 0 1px; background: #919191; color: #fff; }
.root-name b { font-weight: 600; }
.root { padding-right: 3px; gap: 4px; }
.root input {
  appearance: none;
  width: 9px;
  height: 9px;
  margin: 0;
  border: 1px solid #333;
  border-radius: 50%;
  background: radial-gradient(circle, #222 0 2px, #fff 2px);
}
.cube { position: absolute; top: 18px; right: 4px; width: 58px; height: 50px; }
.cube-face { font: 700 9px Roboto, sans-serif; fill: #8c8f92; }
.axis-z, .axis-x { font: 9px "Liberation Sans", Arial, sans-serif; }
.axis-z { fill: #7776f0; }
.axis-x { fill: #ee6c6c; }
.ruler {
  position: absolute;
  inset: 0 0 0 auto;
  width: 7px;
  display: flex;
  flex-direction: column;
  gap: 65px;
  padding: 35px 0 0 1px;
  border-left: 1px solid #aaa;
  background: #fff;
  overflow: hidden;
  color: #888;
  font: 11px/12px "Liberation Sans", Arial, sans-serif;
}
.navbar {
  position: absolute;
  bottom: 3px;
  left: 50%;
  transform: translateX(-50%);
  display: flex;
  gap: 5px;
  padding: 1px 3px;
  background: #f2f2f2;
}
.navbar svg { width: 12px; height: 12px; }
```
